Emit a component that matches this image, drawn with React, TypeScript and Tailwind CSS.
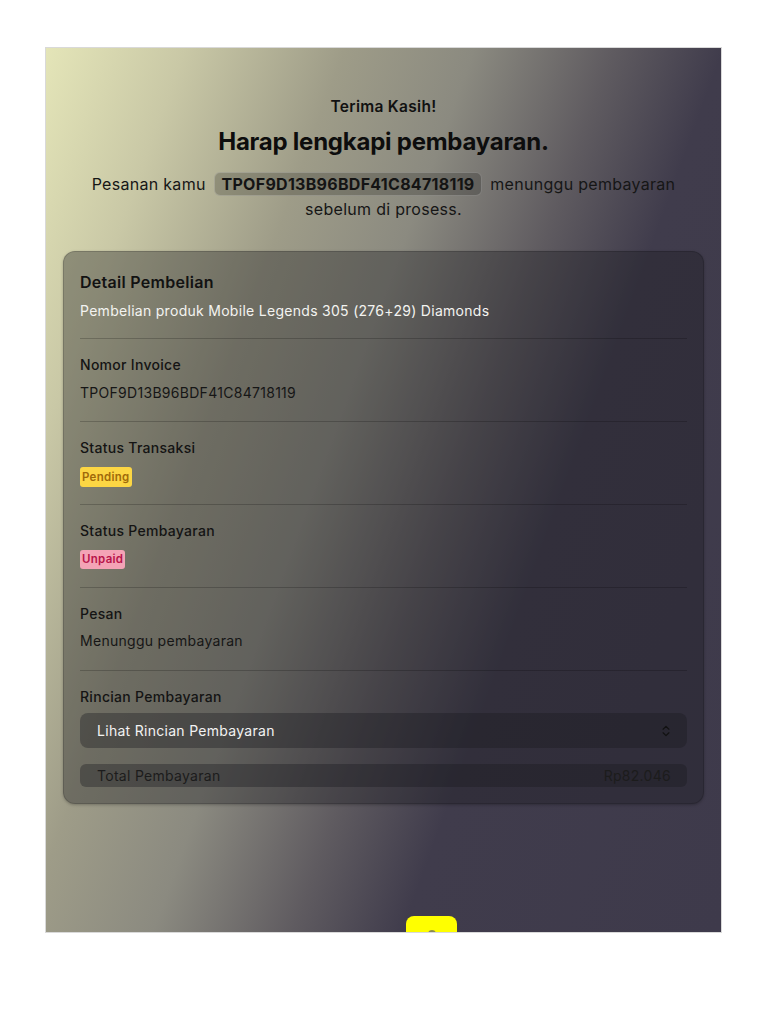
import { ChevronsUpDown } from 'lucide-react';

const orderId = 'TPOF9D13B96BDF41C84718119';

interface RowProps {
  label: string;
  children: React.ReactNode;
  first?: boolean;
  pb: string;
}

function Row({ label, children, first, pb }: RowProps) {
  return (
    <div className={`${first ? '' : 'border-t border-black/20 pt-4'} ${pb}`}>
      <div className={first ? 'text-base font-semibold leading-6 text-[#121212]' : 'text-sm font-medium leading-5 text-[#141414]'}>
        {label}
      </div>
      {children}
    </div>
  );
}

export default function App() {
  return (
    <div className="min-h-[1024px] bg-white pt-12 tracking-[0.018em]" style={{ fontFamily: 'Inter, "Noto Sans", sans-serif' }}>
      <div className="relative ml-[46px] h-[884px] w-[675px] overflow-hidden bg-[linear-gradient(110deg,#e4e5b8_0%,#c9c8a6_14%,#9e9c88_30%,#8b8a80_43%,#5f5b60_57%,#403c4c_68%,#3e3a4b_100%)] shadow-[0_0_0_1px_rgba(0,0,0,0.15)]">
        <div className="px-[17px] pt-[49px]">
          {/* Header */}
          <div className="text-center text-[15.5px] font-semibold leading-5 text-[#111]">Terima Kasih!</div>
          <h1 className="mt-[9px] text-center text-2xl font-bold leading-8 tracking-[-0.01em] text-[#0d0d0d]">
            Harap lengkapi pembayaran.
          </h1>
          <p className="mx-auto mt-[14px] max-w-[610px] text-center text-base leading-[25px] text-[#161616]">
            Pesanan kamu{' '}
            <span className="mx-1 inline-block rounded-md border border-white/20 bg-black/20 px-[6px] font-bold leading-[22px] text-[#141414]">
              {orderId}
            </span>{' '}
            menunggu pembayaran sebelum di prosess.
          </p>

          {/* Detail card */}
          <div className="mt-[29px] rounded-xl border border-black/15 bg-[rgba(26,26,30,0.36)] px-4 pt-[18px] pb-4 shadow-[0_1px_3px_rgba(0,0,0,0.25)]">
            <Row label="Detail Pembelian" first pb="pb-[17px]">
              <div className="mt-[7px] text-sm leading-5 text-[#f3f3f0]">
                Pembelian produk Mobile Legends 305 (276+29) Diamonds
              </div>
            </Row>
            <Row label="Nomor Invoice" pb="pb-[18px]">
              <div className="mt-2 text-sm leading-5 text-[#161616]">{orderId}</div>
            </Row>
            <Row label="Status Transaksi" pb="pb-[17px]">
              <div className="mt-[9px] flex">
                <span className="rounded-[3px] bg-[#fcd644] px-[2px] text-[11.5px] font-semibold leading-[20px] text-[#a06a0a]">
                  Pending
                </span>
              </div>
            </Row>
            <Row label="Status Pembayaran" pb="pb-[18px]">
              <div className="mt-[9px] flex">
                <span className="rounded-[3px] bg-[#f4a3b6] px-[2px] text-[11.5px] font-semibold leading-[19px] text-[#b8144a]">
                  Unpaid
                </span>
              </div>
            </Row>
            <Row label="Pesan" pb="pb-[19px]">
              <div className="mt-[7px] text-sm leading-5 text-[#161616]">Menunggu pembayaran</div>
            </Row>
            <div className="border-t border-black/20 pt-4">
              <div className="text-sm font-medium leading-5 text-[#141414]">Rincian Pembayaran</div>
              <div className="mt-1.5 flex h-[35px] items-center justify-between rounded-lg bg-[rgba(26,26,30,0.36)] pr-[14px] pl-[17px]">
                <span className="text-sm text-[#f2f2f2]">Lihat Rincian Pembayaran</span>
                <ChevronsUpDown size={14} strokeWidth={2} className="text-[#111]" />
              </div>
              <div className="mt-4 flex h-[23px] items-center justify-between rounded-md bg-[rgba(26,26,30,0.36)] pr-4 pl-[17px] text-sm text-[#1c1c1c]">
                <span>Total Pembayaran</span>
                <span>Rp82.046</span>
              </div>
            </div>
          </div>
        </div>

        {/* floating button peeking from the bottom */}
        <div className="absolute top-[868px] left-[360px] flex h-[51px] w-[51px] justify-center rounded-lg bg-[#ffff00]">
          <div className="mt-[14px] h-2 w-2 rounded-full bg-[#8a8a55]" />
        </div>
      </div>
    </div>
  );
}
